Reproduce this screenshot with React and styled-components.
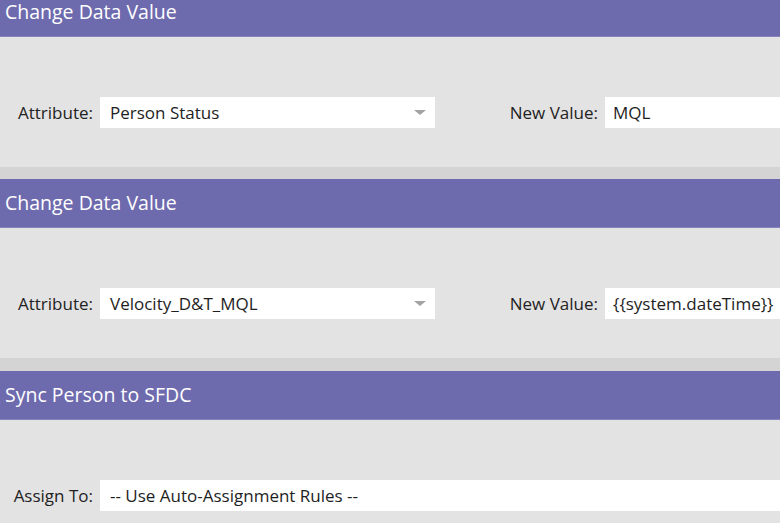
import React from "react";
import styled, { createGlobalStyle } from "styled-components";

const Global = createGlobalStyle`
  html, body { margin: 0; padding: 0; }
  body {
    background: #e3e3e3;
    font-family: "Open Sans", "Noto Sans", sans-serif;
    overflow: hidden;
  }
`;

const Viewport = styled.div`
  width: 780px;
  height: 523px;
  overflow: hidden;
`;

const Page = styled.div`
  margin-top: -12px;
  display: flex;
  flex-direction: column;
`;

const Header = styled.div`
  height: 49px;
  box-sizing: border-box;
  background: #6e6aae;
  border-bottom: 1px solid #8784bd;
  color: #ffffff;
  font-size: 19.5px;
  display: flex;
  align-items: center;
  padding-left: 5px;
  padding-bottom: 1px;
`;

const Panel = styled.div`
  height: ${(p) => (p.$last ? "200px" : "130px")};
  box-sizing: border-box;
  background: #e3e3e3;
  padding-top: 60px;
`;

const Divider = styled.div`
  height: ${(p) => p.$h || 12}px;
  background: #d4d4d4;
`;

const Row = styled.div`
  display: flex;
  align-items: center;
  height: 31px;
`;

const Label = styled.div`
  width: ${(p) => p.$w}px;
  flex: none;
  text-align: right;
  padding-right: 7px;
  box-sizing: border-box;
  font-size: 17px;
  color: #222222;
  white-space: nowrap;
`;

const Field = styled.div`
  position: relative;
  flex: none;
  width: ${(p) => p.$w}px;
  height: 31px;
  box-sizing: border-box;
  background: #ffffff;
  display: flex;
  align-items: center;
  padding-left: ${(p) => p.$pad}px;
  font-size: 17px;
  color: #1e1e1e;
  white-space: nowrap;
`;

const Arrow = styled.span`
  position: absolute;
  right: 9px;
  top: 13px;
  width: 0;
  height: 0;
  border-left: 6px solid transparent;
  border-right: 6px solid transparent;
  border-top: 5px solid #a3a3a3;
`;

function ChangeBlock({ title, attr, value, divider }) {
  return (
    <>
      <Header>{title}</Header>
      <Panel>
        <Row>
          <Label $w={100}>Attribute:</Label>
          <Field $w={335} $pad={10}>
            {attr}
            <Arrow />
          </Field>
          <Label $w={170}>New Value:</Label>
          <Field $w={250} $pad={8}>{value}</Field>
        </Row>
      </Panel>
      <Divider $h={divider} />
    </>
  );
}

export default function App() {
  return (
    <>
      <Global />
      <Viewport>
        <Page>
          <ChangeBlock title="Change Data Value" attr="Person Status" value="MQL" divider={12} />
          <ChangeBlock
            title="Change Data Value"
            attr="Velocity_D&T_MQL"
            value="{{system.dateTime}}"
            divider={13}
          />
          <Header>Sync Person to SFDC</Header>
          <Panel $last>
            <Row>
              <Label $w={100}>Assign To:</Label>
              <Field $w={760} $pad={10}>-- Use Auto-Assignment Rules --</Field>
            </Row>
          </Panel>
        </Page>
      </Viewport>
    </>
  );
}
